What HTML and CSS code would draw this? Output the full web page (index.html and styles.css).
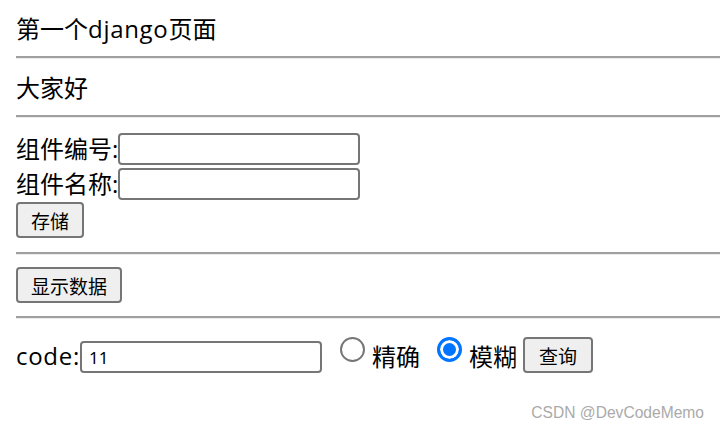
FILE: index.html
```html
<!DOCTYPE html>
<html lang="zh">
<head>
    <meta charset="UTF-8">
    <title>第一个django页面</title>
    <link rel="stylesheet" href="styles.css">
</head>
<body>
    <div class="title">第一个<span class="latin">django</span>页面</div>
    <hr>
    <div class="greet">大家好</div>
    <hr>

    <form class="save-form">
        <div class="row">
            <label for="compNo">组件编号:</label><input type="text" id="compNo" name="compNo">
        </div>
        <div class="row">
            <label for="compName">组件名称:</label><input type="text" id="compName" name="compName">
        </div>
        <button type="submit" class="btn btn-save">存储</button>
    </form>
    <hr class="hr-save">

    <button class="btn btn-show">显示数据</button>
    <hr class="hr-show">

    <form class="query-form">
        <label for="code" class="latin">code:</label><input type="text" id="code" name="code" value="11" class="code-input">
        <input type="radio" name="mode" id="exact" class="radio">
        <label for="exact" class="radio-label">精确</label>
        <input type="radio" name="mode" id="fuzzy" class="radio" checked>
        <label for="fuzzy" class="radio-label">模糊</label>
        <button type="submit" class="btn btn-query">查询</button>
    </form>

    <div class="watermark">CSDN @DevCodeMemo</div>
</body>
</html>
```

FILE: styles.css
```css
body {
    margin: 0;
    padding-left: 16px;
    font-family: "Open Sans", "Noto Sans CJK SC", sans-serif;
    font-size: 24px;
    color: #000;
    background: #fff;
    height: 431px;
    overflow: hidden;
}
.latin {
    letter-spacing: 0.7px;
}
.title, .greet {
    height: 56px;
    line-height: 58px;
}
hr {
    margin: 0;
    height: 0;
    border: none;
    border-top: 2px solid #a0a0a0;
    border-bottom: 1px solid #ececec;
}
.save-form {
    padding-top: 15px;
}
.row {
    display: flex;
    align-items: center;
    height: 32px;
    margin-bottom: 3px;
    line-height: 32px;
}
input[type="text"] {
    box-sizing: border-box;
    width: 242px;
    height: 32px;
    margin: 0;
    padding: 0 7px;
    border: 2px solid #767676;
    border-radius: 4px;
    font-family: "Noto Sans", sans-serif;
    font-size: 17px;
    background: #fff;
}
.btn {
    box-sizing: border-box;
    display: block;
    height: 36px;
    padding: 0;
    border: 2px solid #767676;
    border-radius: 4px;
    background: #efefef;
    font-family: "Noto Sans CJK SC", sans-serif;
    font-size: 19px;
    color: #000;
}
.btn-save {
    margin-top: -1px;
    width: 68px;
}
.hr-save {
    margin-top: 14px;
}
.btn-show {
    margin-top: 12px;
    width: 106px;
}
.hr-show {
    margin-top: 13px;
}
.query-form {
    display: flex;
    align-items: center;
    margin-top: 18px;
    height: 36px;
}
.code-input {
    align-self: flex-end;
    margin-bottom: -1px;
}
.radio {
    appearance: none;
    box-sizing: border-box;
    width: 25px;
    height: 25px;
    margin: 0 7px 12px 18px;
    border: 2px solid #767676;
    border-radius: 50%;
    background: #fff;
}
.radio:checked {
    border: 3px solid #0075ff;
    background: #0075ff;
    box-shadow: inset 0 0 0 3px #fff;
}
#fuzzy {
    margin-left: 17px;
}
.radio-label {
    margin-top: 1px;
}
.btn-query {
    margin-left: 6px;
    width: 70px;
}
.watermark {
    position: absolute;
    right: 16px;
    top: 404px;
    font-family: "Liberation Sans", Arial, sans-serif;
    font-size: 15.6px;
    color: #aaa;
}
```
